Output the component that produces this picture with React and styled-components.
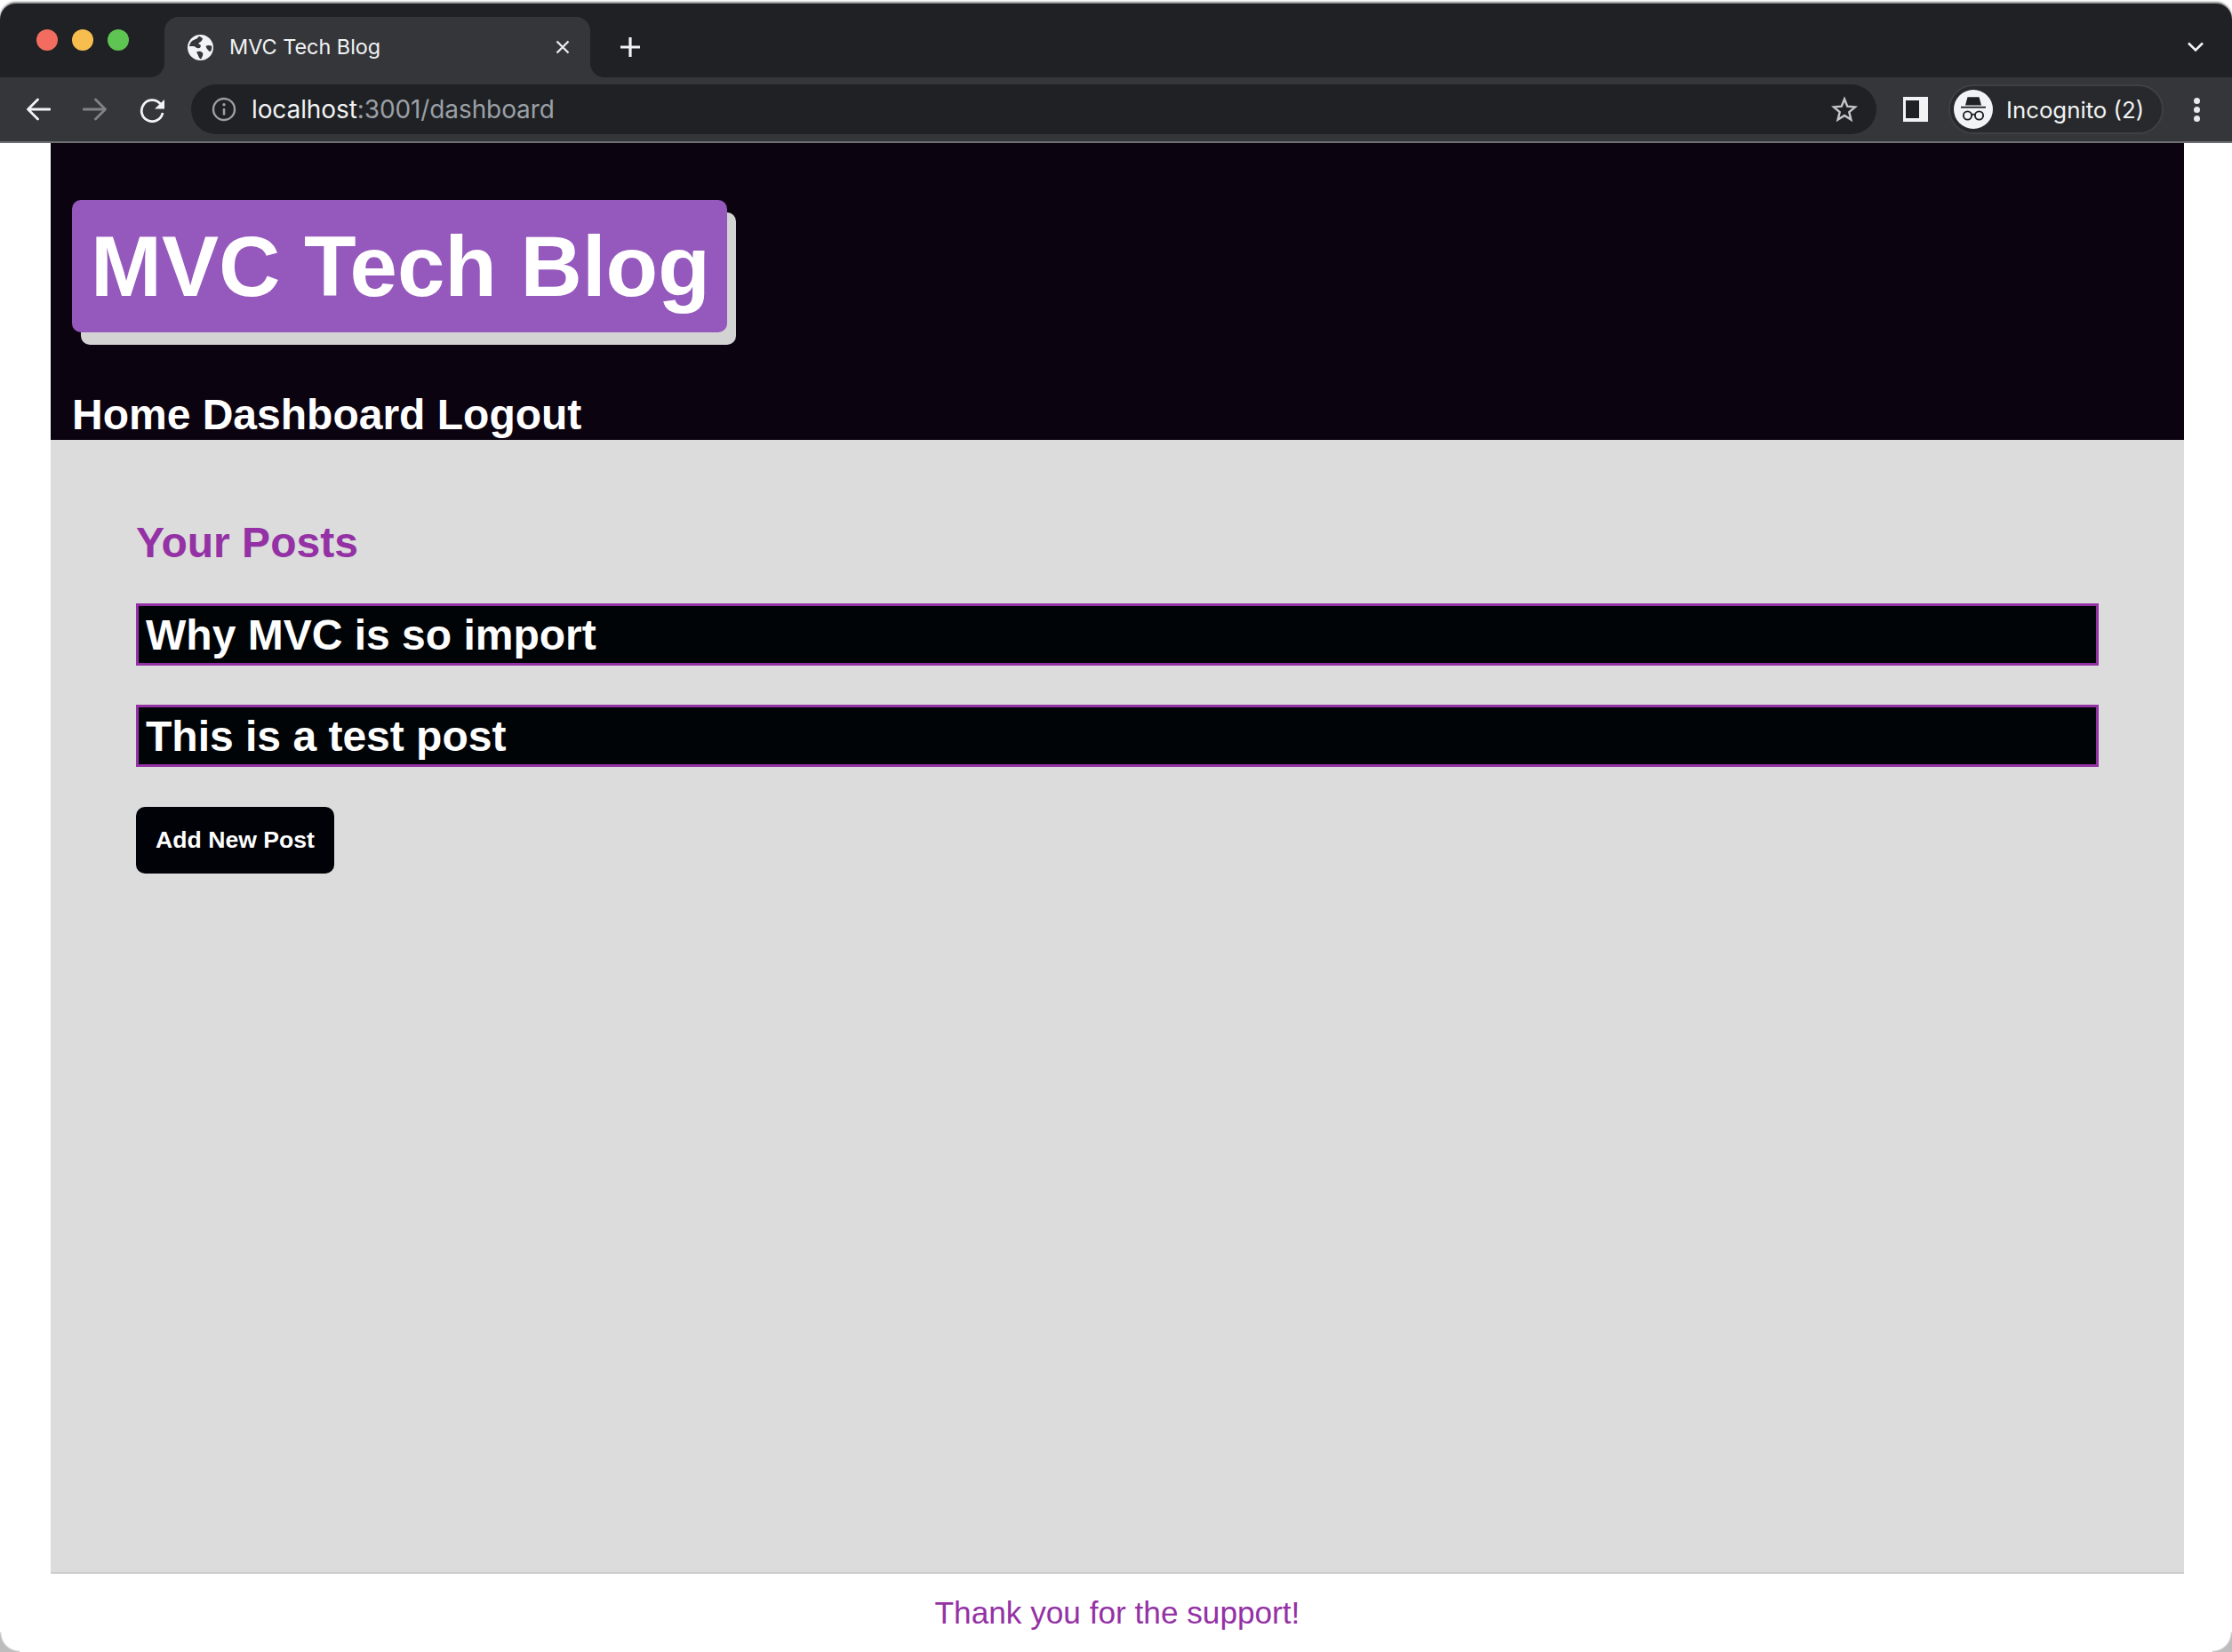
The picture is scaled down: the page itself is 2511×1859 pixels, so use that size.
import React from 'react';
import styled, { createGlobalStyle } from 'styled-components';

const GlobalStyle = createGlobalStyle`
  html, body {
    margin: 0;
    padding: 0;
    background: #fff;
  }
  * {
    box-sizing: border-box;
  }
`;

const Window = styled.div`
  position: relative;
  width: 2511px;
  height: 1859px;
  padding-top: 4px;
  display: flex;
  flex-direction: column;
  overflow: hidden;
  background: #fff;
  font-family: "Liberation Sans", Arial, sans-serif;
`;

const WindowEdge = styled.div`
  position: absolute;
  bottom: 0;
  ${props => (props.$right ? 'right: 0;' : 'left: 0;')}
  width: 22px;
  height: 22px;
  background: radial-gradient(circle at ${props => (props.$right ? '0 0' : '100% 0')}, #fff 20px, #bdbdbd 22px);
`;

const TabStrip = styled.div`
  height: 83px;
  flex: none;
  display: flex;
  align-items: flex-end;
  padding-left: 41px;
  background: #202124;
  border-radius: 18px 18px 0 0;
  box-shadow: 0 -2px 2px rgba(90, 90, 90, 0.7);
  position: relative;
  z-index: 1;
`;

const Lights = styled.div`
  display: flex;
  gap: 16px;
  align-self: flex-start;
  margin-top: 29px;
  margin-right: 40px;
`;

const Light = styled.span`
  width: 24px;
  height: 24px;
  border-radius: 50%;
  background: ${props => props.color};
`;

const Tab = styled.div`
  position: relative;
  width: 479px;
  height: 68px;
  padding: 0 22px 0 26px;
  display: flex;
  align-items: center;
  background: #35363a;
  border-radius: 16px 16px 0 0;
  color: #f1f3f4;

  &::before,
  &::after {
    content: '';
    position: absolute;
    bottom: 0;
    width: 16px;
    height: 16px;
  }
  &::before {
    left: -16px;
    background: radial-gradient(circle at 0 0, #202124 15.5px, #35363a 16.5px);
  }
  &::after {
    right: -16px;
    background: radial-gradient(circle at 100% 0, #202124 15.5px, #35363a 16.5px);
  }
`;

const TabTitle = styled.span`
  margin-left: 18px;
  flex: 1;
  font-family: Inter, "Liberation Sans", sans-serif;
  font-size: 23.4px;
  line-height: 1;
`;

const NewTab = styled.button`
  margin: 0 0 22px 33px;
  padding: 0;
  border: 0;
  background: none;
  display: flex;
`;

const StripMenu = styled.button`
  margin: 0 31px 24px auto;
  padding: 0;
  border: 0;
  background: none;
  display: flex;
`;

const Toolbar = styled.div`
  height: 74px;
  flex: none;
  display: flex;
  align-items: center;
  padding-left: 27px;
  background: #35363a;
  border-bottom: 2px solid #6f7073;
`;

const NavIcon = styled.button`
  width: 32px;
  height: 32px;
  padding: 0;
  margin-right: 32px;
  border: 0;
  background: none;
  display: flex;
  align-items: center;
  justify-content: center;
`;

const Omnibox = styled.div`
  width: 1896px;
  height: 56px;
  margin-left: -4px;
  padding: 0 21px 0 23px;
  display: flex;
  align-items: center;
  border-radius: 28px;
  background: #202124;
`;

const Url = styled.div`
  flex: 1;
  margin-left: 17px;
  font-family: Inter, "Liberation Sans", sans-serif;
  font-size: 28px;
  letter-spacing: -0.1px;
  color: #f1f3f4;

  span {
    color: #9aa0a6;
  }
`;

const SidePanel = styled.div`
  width: 28px;
  height: 28px;
  margin-left: 30px;
  flex: none;
  border: 4px solid #f1f3f4;
  border-left-width: 3px;
  border-right-width: 10px;
  background: #202124;
`;

const Profile = styled.div`
  width: 242px;
  height: 56px;
  margin-left: 23px;
  padding: 0 0 0 4px;
  display: flex;
  align-items: center;
  border-radius: 28px;
  background: #28292c;
  border: 2px solid #3f4043;
  color: #f1f3f4;
  font-family: Inter, "Liberation Sans", sans-serif;
  font-size: 25.8px;
`;

const Avatar = styled.div`
  width: 44px;
  height: 44px;
  flex: none;
  border-radius: 50%;
  background: #f1f3f4;
  display: flex;
  align-items: center;
  justify-content: center;
`;

const ProfileName = styled.span`
  margin-left: 15px;
  white-space: nowrap;
`;

const Menu = styled.div`
  margin-left: 34px;
  display: flex;
  flex-direction: column;
  gap: 3px;

  span {
    width: 7px;
    height: 7px;
    border-radius: 50%;
    background: #e8eaed;
  }
`;

const Page = styled.div`
  flex: 1;
  min-height: 0;
  width: 2400px;
  margin-left: 57px;
  display: flex;
  flex-direction: column;
`;

const Header = styled.header`
  height: 334px;
  flex: none;
  padding: 64px 24px 0;
  background: #0c0311;
  display: flex;
  flex-direction: column;
  align-items: flex-start;
`;

const Logo = styled.h1`
  margin: 0;
  width: 737px;
  height: 150px;
  padding: 0 0 0 21px;
  display: flex;
  align-items: center;
  border-radius: 10px;
  background: #9558bc;
  box-shadow: 10px 14px 0 #d3d3d3;
  color: #fff;
  font-size: 96px;
  font-weight: 700;
  white-space: nowrap;
`;

const Nav = styled.nav`
  margin-top: 65px;
  font-size: 48px;
  font-weight: 700;
  line-height: 56px;
  color: #fff;
  white-space: nowrap;
`;

const Main = styled.main`
  flex: 1;
  padding: 88px 96px 0;
  background: #dcdcdc;
`;

const SectionTitle = styled.h2`
  margin: 0 0 40px;
  font-size: 48px;
  line-height: 56px;
  font-weight: 700;
  color: #9431a5;
`;

const Post = styled.div`
  height: 70px;
  margin-bottom: 44px;
  padding-left: 8px;
  display: flex;
  align-items: center;
  border: 3px solid #9431a5;
  background: #010407;
  color: #fff;
  font-size: 48px;
  font-weight: 700;
`;

const AddButton = styled.button`
  width: 223px;
  height: 75px;
  margin-top: 1px;
  padding: 0;
  border: 0;
  border-radius: 10px;
  background: #010207;
  color: #fff;
  font-family: inherit;
  font-size: 26.6px;
  font-weight: 700;
`;

const Footer = styled.footer`
  height: 90px;
  flex: none;
  padding-top: 16px;
  border-top: 2px solid #cccccc;
  text-align: center;
  font-size: 35.2px;
  line-height: 56px;
  color: #9431a5;
`;

const Icon = ({ size = 28, children, view = '0 0 24 24' }) => (
  <svg width={size} height={size} viewBox={view} fill="none">
    {children}
  </svg>
);

const Globe = () => (
  <Icon size={29}>
    <circle cx="12" cy="12" r="12" fill="#f1f3f4" />
    <path
      d="M10.5 1.5 C9.5 4 7 4.5 4.5 5.5 C3 6.5 2 9 1.5 11 C4 10.5 6.5 10.5 8 12 C9 13 11 13 12 11.5 C13 10 11.5 9 10 8.5 C11 7 13.5 6.5 14 4 C13.8 3 12 2 10.5 1.5 Z"
      fill="#35363a"
    />
    <path
      d="M8.5 16 C10.5 15 13 15.5 14 17 C15 18.5 13.5 21 12.5 23 C11 22.5 10 20 9.5 18.5 C9 17.5 8.5 17 8.5 16 Z M17 10.5 C19 9.5 21 10 22.5 10.5 C23 12.5 22 15 21 16 C19.5 15 17.5 13 17 10.5 Z"
      fill="#35363a"
    />
  </Icon>
);

const Close = () => (
  <Icon size={18} view="0 0 18 18">
    <path d="M2.5 2.5 L15.5 15.5 M15.5 2.5 L2.5 15.5" stroke="#e8eaed" strokeWidth="2.4" />
  </Icon>
);

const Plus = () => (
  <Icon size={24} view="0 0 24 24">
    <path d="M12 1 V23 M1 12 H23" stroke="#f1f3f4" strokeWidth="3.2" />
  </Icon>
);

const Chevron = () => (
  <Icon size={20} view="0 0 20 20">
    <path d="M2 5.5 L10 13.5 L18 5.5" stroke="#f1f3f4" strokeWidth="2.6" />
  </Icon>
);

const Arrow = ({ flip, color }) => (
  <svg width="28" height="26" viewBox="0 0 28 26" fill="none" style={flip ? { transform: 'scaleX(-1)' } : undefined}>
    <path d="M27 13 H3 M13.5 2 L2.5 13 L13.5 24" stroke={color} strokeWidth="2.8" strokeLinecap="round" strokeLinejoin="round" />
  </svg>
);

const Reload = () => (
  <Icon size={30} view="0 0 30 30">
    <path d="M24.5 9 A12 12 0 1 0 27 19" stroke="#f1f3f4" strokeWidth="2.8" />
    <path d="M29 4 V14.5 H18 Z" fill="#f1f3f4" />
  </Icon>
);

const Info = () => (
  <Icon size={28} view="0 0 28 28">
    <circle cx="14" cy="14" r="12" stroke="#9aa0a6" strokeWidth="2.4" />
    <path d="M14 13 V20.5" stroke="#9aa0a6" strokeWidth="2.6" />
    <circle cx="14" cy="8.8" r="1.7" fill="#9aa0a6" />
  </Icon>
);

const Star = () => (
  <Icon size={30} view="0 0 30 30">
    <path
      d="M15 3.5 L18.3 11.7 L27 12.4 L20.3 18.1 L22.4 26.6 L15 22 L7.6 26.6 L9.7 18.1 L3 12.4 L11.7 11.7 Z"
      stroke="#c4c7ca"
      strokeWidth="2.4"
      strokeLinejoin="miter"
    />
  </Icon>
);

const Incognito = () => (
  <Icon size={36} view="0 0 36 36">
    <path d="M11.5 4.3 H24.5 L27 13.5 H9 Z" fill="#202124" />
    <rect x="4" y="14.8" width="28" height="1.8" fill="#202124" />
    <circle cx="11.5" cy="25" r="4.6" stroke="#202124" strokeWidth="1.9" />
    <circle cx="24.5" cy="25" r="4.6" stroke="#202124" strokeWidth="1.9" />
    <path d="M16 24.2 Q18 23 20 24.2" stroke="#202124" strokeWidth="1.8" />
  </Icon>
);

const posts = ['Why MVC is so import', 'This is a test post'];

const App = () => (
  <Window>
    <GlobalStyle />
    <TabStrip>
      <Lights>
        <Light color="#f26d60" />
        <Light color="#f7bd4f" />
        <Light color="#5ec452" />
      </Lights>
      <Tab>
        <Globe />
        <TabTitle>MVC Tech Blog</TabTitle>
        <Close />
      </Tab>
      <NewTab>
        <Plus />
      </NewTab>
      <StripMenu>
        <Chevron />
      </StripMenu>
    </TabStrip>
    <Toolbar>
      <NavIcon>
        <Arrow color="#f1f3f4" />
      </NavIcon>
      <NavIcon>
        <Arrow flip color="#808285" />
      </NavIcon>
      <NavIcon>
        <Reload />
      </NavIcon>
      <Omnibox>
        <Info />
        <Url>
          localhost<span>:3001/dashboard</span>
        </Url>
        <Star />
      </Omnibox>
      <SidePanel />
      <Profile>
        <Avatar>
          <Incognito />
        </Avatar>
        <ProfileName>Incognito (2)</ProfileName>
      </Profile>
      <Menu>
        <span />
        <span />
        <span />
      </Menu>
    </Toolbar>
    <Page>
      <Header>
        <Logo>MVC Tech Blog</Logo>
        <Nav>Home Dashboard Logout</Nav>
      </Header>
      <Main>
        <SectionTitle>Your Posts</SectionTitle>
        {posts.map(title => (
          <Post key={title}>{title}</Post>
        ))}
        <AddButton>Add New Post</AddButton>
      </Main>
      <Footer>Thank you for the support!</Footer>
    </Page>
    <WindowEdge />
    <WindowEdge $right />
  </Window>
);

export default App;
